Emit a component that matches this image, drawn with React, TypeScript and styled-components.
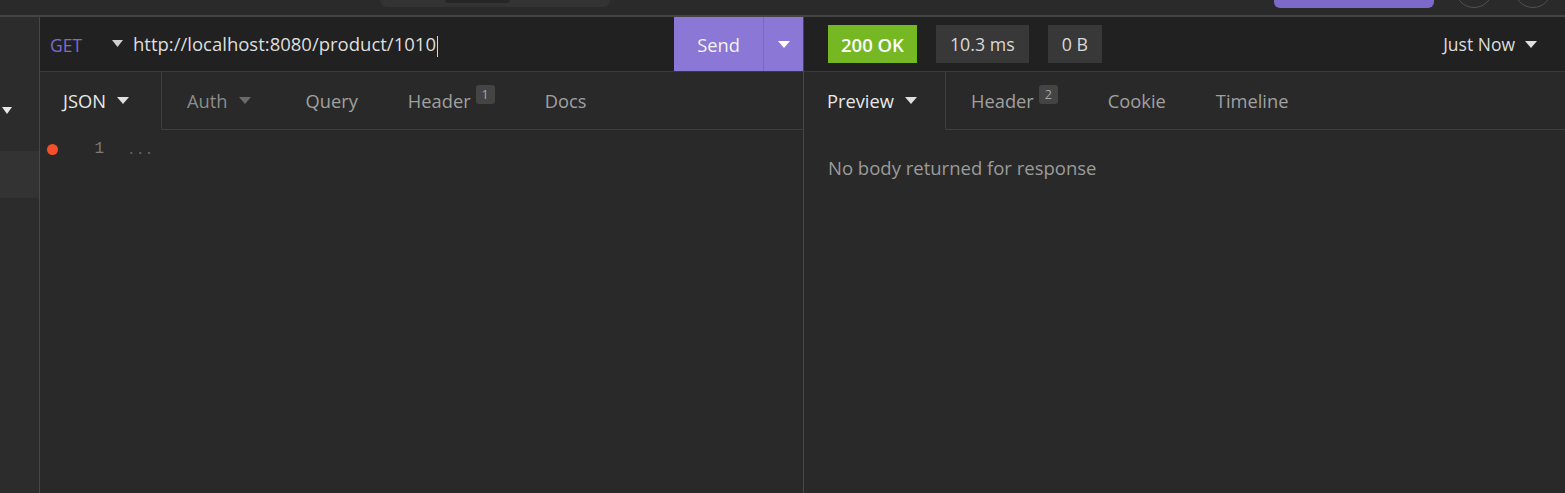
import React from 'react';
import styled, { createGlobalStyle, css } from 'styled-components';

const GlobalStyle = createGlobalStyle`
    html, body {
        margin: 0;
        padding: 0;
        background: #292929;
        font-family: "Open Sans", "Noto Sans", sans-serif;
        overflow: hidden;
    }
    * {
        box-sizing: border-box;
    }
`

interface TabProps {
    active?: boolean,
    dim?: boolean,
    width?: number
}

const Page = styled.div`
    width: 1565px;
    height: 493px;
    display: flex;
    flex-direction: column;
    background: #292929;
`

const TopBar = styled.div`
    height: 17px;
    flex-shrink: 0;
    display: flex;
    align-items: flex-start;
    background: #2a2a2a;
    border-bottom: 2px solid #434343;
    overflow: hidden;
`
const SearchPill = styled.div`
    margin-left: 380px;
    width: 230px;
    height: 7px;
    background: #333333;
    border-radius: 0 0 14px 14px;
    display: flex;
    justify-content: center;
`
const SearchInner = styled.div`
    margin-left: -35px;
    width: 65px;
    height: 3px;
    background: #262626;
    border-radius: 0 0 8px 8px;
`
const TopButton = styled.div`
    margin-left: 664px;
    width: 160px;
    height: 8px;
    background: #7d69c9;
    border-radius: 0 0 6px 6px;
`
const TopCircle = styled.div`
    margin-left: 21px;
    margin-top: -30px;
    width: 38px;
    height: 38px;
    border-radius: 50%;
    border: 1px solid #505050;
    flex-shrink: 0;
`

const Main = styled.div`
    flex: 1;
    display: flex;
    min-height: 0;
`

const Sidebar = styled.div`
    width: 40px;
    flex-shrink: 0;
    background: #2c2c2c;
    border-right: 1px solid #474747;
    display: flex;
    flex-direction: column;
`
const SideCaretRow = styled.div`
    height: 134px;
    display: flex;
    align-items: flex-end;
    padding: 0 0 37px 2px;
`
const SideItem = styled.div`
    height: 47px;
    background: #333333;
`

const Pane = styled.div<{ width: number, border?: boolean }>`
    width: ${props => props.width}px;
    flex-shrink: 0;
    display: flex;
    flex-direction: column;
    ${props => props.border && css`border-right: 1px solid #474747;`}
`

const TopRow = styled.div`
    height: 55px;
    flex-shrink: 0;
    display: flex;
    align-items: center;
    background: #212121;
    border-bottom: 1px solid #3a3a3a;
`

const Method = styled.div`
    color: #7e6ad0;
    font-size: 17.5px;
    padding-left: 10px;
    width: 72px;
    margin-top: 2px;
`
const Url = styled.div`
    flex: 1;
    display: flex;
    align-items: center;
    color: #dedede;
    font-size: 18.5px;
    gap: 10px;
`
const Cursor = styled.span`
    display: inline-block;
    width: 1px;
    height: 21px;
    background: #d8d8d8;
    margin-left: 1px;
    vertical-align: middle;
`
const SendButton = styled.div`
    height: 54px;
    display: flex;
    background: #8a77d6;
    color: #f4f4f4;
    font-size: 18.3px;
    align-self: flex-start;
`
const SendLabel = styled.div`
    width: 90px;
    display: flex;
    align-items: center;
    justify-content: center;
    border-right: 1px solid #7a68c0;
`
const SendDrop = styled.div`
    width: 39px;
    display: flex;
    align-items: center;
    justify-content: center;
`

const StatusBadge = styled.div<{ ok?: boolean }>`
    height: 38px;
    padding: 0 ${props => props.ok ? 13 : 14}px;
    display: flex;
    align-items: center;
    font-size: ${props => props.ok ? 18.5 : 17.8}px;
    color: ${props => props.ok ? '#ffffff' : '#d9d9d9'};
    background: ${props => props.ok ? '#75b824' : '#383838'};
    font-weight: ${props => props.ok ? 600 : 400};
    margin-right: 19px;
`
const StatusRow = styled.div`
    display: flex;
    align-items: center;
    padding-left: 24px;
    flex: 1;
`
const JustNow = styled.div`
    display: flex;
    align-items: center;
    gap: 10px;
    color: #dcdcdc;
    font-size: 17.5px;
    padding-right: 28px;
`

const TabRow = styled.div`
    height: 58px;
    flex-shrink: 0;
    display: flex;
`
const Tab = styled.div<TabProps>`
    display: flex;
    align-items: center;
    gap: 11px;
    padding: 0 25px;
    font-size: 18.3px;
    color: ${props => props.active ? '#e8e8e8' : props.dim ? '#8c8c8c' : '#a0a0a0'};
    border-bottom: 1px solid ${props => props.active ? 'transparent' : '#3f3f3f'};
    border-right: ${props => props.active ? '1px solid #3f3f3f' : 'none'};
    white-space: nowrap;
    ${props => props.width && css`width: ${props.width}px;`}
    ${props => props.dim && css`padding-right: 30px;`}
`
const ActiveTab = styled(Tab)`
    padding: 0 0 0 23px;
`
const TabFill = styled.div`
    flex: 1;
    border-bottom: 1px solid #3f3f3f;
`
const Badge = styled.span`
    display: inline-flex;
    align-items: center;
    justify-content: center;
    width: 19px;
    height: 19px;
    margin: -12px 0 0 -6px;
    border-radius: 3px;
    background: #444444;
    color: #a8a8a8;
    font-size: 12.5px;
`

const Editor = styled.div`
    display: flex;
    align-items: center;
    padding: 10px 0 0 7px;
    font-family: "DejaVu Sans Mono", "Liberation Mono", monospace;
    font-size: 15px;
`
const BreakDot = styled.div`
    width: 11px;
    height: 11px;
    border-radius: 50%;
    background: #f4502e;
`
const LineNo = styled.div`
    width: 46px;
    text-align: right;
    color: #7a7a7a;
    font-family: "Liberation Mono", monospace;
    font-size: 16px;
`
const Fold = styled.div`
    margin-left: 23px;
    color: #666666;
    font-size: 14px;
    letter-spacing: 0.5px;
`

const Empty = styled.div`
    padding: 25px 0 0 24px;
    color: #9b9b9b;
    font-size: 18.5px;
`

function Caret({ color = '#e0e0e0', w = 12 }: { color?: string, w?: number }) {
    return (
        <svg width={w} height="7" viewBox="0 0 12 7" preserveAspectRatio="none">
            <path d="M0 0 L12 0 L6 7 Z" fill={color} />
        </svg>
    )
}

export default function App() {
    return (
        <Page>
            <GlobalStyle />
            <TopBar>
                <SearchPill>
                    <SearchInner />
                </SearchPill>
                <TopButton />
                <TopCircle />
                <TopCircle />
            </TopBar>
            <Main>
                <Sidebar>
                    <SideCaretRow>
                        <Caret color="#e8e8e8" w={10} />
                    </SideCaretRow>
                    <SideItem />
                </Sidebar>

                <Pane width={764} border>
                    <TopRow>
                        <Method>GET</Method>
                        <Url>
                            <Caret color="#d0d0d0" w={11} />
                            <span>http://localhost:8080/product/1010<Cursor /></span>
                        </Url>
                        <SendButton>
                            <SendLabel>Send</SendLabel>
                            <SendDrop><Caret color="#ffffff" /></SendDrop>
                        </SendButton>
                    </TopRow>
                    <TabRow>
                        <ActiveTab active width={122}>JSON <Caret /></ActiveTab>
                        <Tab dim>Auth <Caret color="#6a6a6a" /></Tab>
                        <Tab>Query</Tab>
                        <Tab>Header <Badge>1</Badge></Tab>
                        <Tab>Docs</Tab>
                        <TabFill />
                    </TabRow>
                    <Editor>
                        <BreakDot />
                        <LineNo>1</LineNo>
                        <Fold>...</Fold>
                    </Editor>
                </Pane>

                <Pane width={761}>
                    <TopRow>
                        <StatusRow>
                            <StatusBadge ok>200 OK</StatusBadge>
                            <StatusBadge>10.3 ms</StatusBadge>
                            <StatusBadge>0 B</StatusBadge>
                        </StatusRow>
                        <JustNow>Just Now <Caret /></JustNow>
                    </TopRow>
                    <TabRow>
                        <ActiveTab active width={142}>Preview <Caret /></ActiveTab>
                        <Tab>Header <Badge>2</Badge></Tab>
                        <Tab>Cookie</Tab>
                        <Tab>Timeline</Tab>
                        <TabFill />
                    </TabRow>
                    <Empty>No body returned for response</Empty>
                </Pane>
            </Main>
        </Page>
    )
}
